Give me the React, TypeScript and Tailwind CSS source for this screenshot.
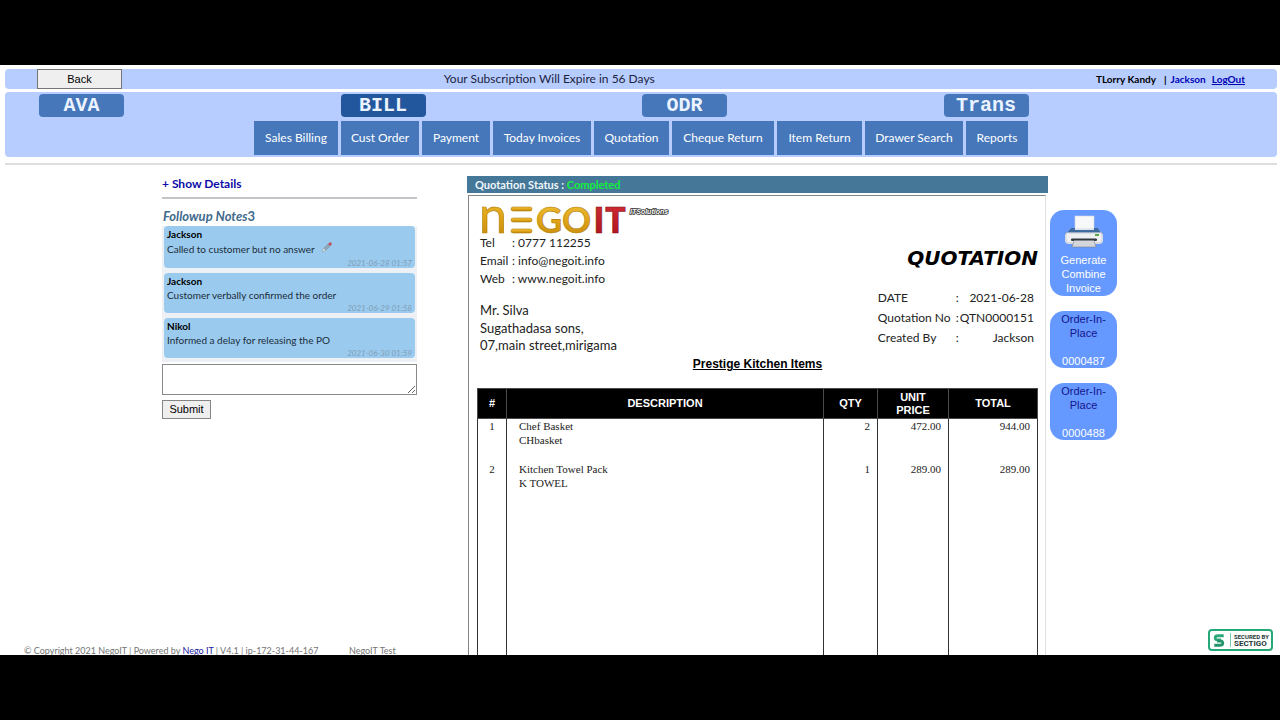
import { clsx } from "clsx";

const mainTabs = ["AVA", "BILL", "ODR", "Trans"];

const subTabs = [
  { label: "Sales Billing", width: "w-[84px]" },
  { label: "Cust Order", width: "w-[78px]" },
  { label: "Payment", width: "w-[68px]" },
  { label: "Today Invoices", width: "w-[98px]" },
  { label: "Quotation", width: "w-[75px]" },
  { label: "Cheque Return", width: "w-[102px]" },
  { label: "Item Return", width: "w-[85px]" },
  { label: "Drawer Search", width: "w-[98px]" },
  { label: "Reports", width: "w-[62px]" },
];

const notes = [
  { author: "Jackson", text: "Called to customer but no answer", date: "2021-06-28 01:57", editable: true },
  { author: "Jackson", text: "Customer verbally confirmed the order", date: "2021-06-29 01:58" },
  { author: "Nikol", text: "Informed a delay for releasing the PO", date: "2021-06-30 01:59" },
];

const contacts = [
  ["Tel", "0777 112255"],
  ["Email", "info@negoit.info"],
  ["Web", "www.negoit.info"],
];

const meta = [
  ["DATE", "2021-06-28"],
  ["Quotation No", "QTN0000151"],
  ["Created By", "Jackson"],
];

const items = [
  { name: "Chef Basket", code: "CHbasket", qty: 2, price: "472.00", total: "944.00" },
  { name: "Kitchen Towel Pack", code: "K TOWEL", qty: 1, price: "289.00", total: "289.00" },
];

function Header() {
  return (
    <header className="shrink-0 pt-1 pl-[5px] pr-[3px]">
      <div className="grid h-5 grid-cols-3 items-center rounded bg-[#b7cdff] pr-8 pl-8">
        <button className="h-5 w-[85px] border border-[#767676] bg-[#efefef] font-['Liberation_Sans',sans-serif] text-[11px] leading-4 text-black">
          Back
        </button>
        <p className="pl-1 text-[12px] whitespace-nowrap text-[#1c2340]">Your Subscription Will Expire in 56 Days</p>
        <div className="flex justify-end text-[10px] font-bold whitespace-nowrap text-black">
          <span className="mr-2">TLorry Kandy</span>
          <span className="mr-1">|</span>
          <a href="#profile" className="mr-1.5 text-[#0000b4]">Jackson</a>
          <a href="#logout" className="text-[#0000b4] underline">LogOut</a>
        </div>
      </div>

      <nav className="mt-[3px] h-[65px] rounded bg-[#b7cdff] pt-0.5">
        <div className="grid grid-cols-4 pr-8 pl-[34px]">
          {mainTabs.map((tab) => (
            <button
              key={tab}
              className={clsx(
                "h-[23px] w-[85px] rounded font-['Courier_New','Liberation_Mono',monospace] text-[20px] leading-[23px] font-bold text-[#eaf3ff]",
                tab === "BILL" ? "bg-[#22569d]" : "bg-[#4677bb]",
              )}
            >
              {tab}
            </button>
          ))}
        </div>
        <div className="mt-1 flex justify-center gap-[3px]">
          {subTabs.map((tab) => (
            <button
              key={tab.label}
              className={clsx("h-[34px] bg-[#4677bb] text-[12px] whitespace-nowrap text-white", tab.width)}
            >
              {tab.label}
            </button>
          ))}
        </div>
      </nav>
      <hr className="mt-1.5 border-t-2 border-[#dedede]" />
    </header>
  );
}

function Pencil() {
  return (
    <svg viewBox="0 0 12 12" className="h-3 w-3" aria-hidden="true">
      <path d="M1.5 10.5 2.5 7.5 7 3 9 5 4.5 9.5Z" fill="#8fa9bd" stroke="#6f8b9f" strokeWidth=".6" />
      <path d="M1.5 10.5 2.5 7.5 4.5 9.5Z" fill="#e6dcd0" />
      <path d="M7 3 8.5 1.5Q9.3.9 10 1.6L10.6 2.2Q11.2 3 10.5 3.7L9 5Z" fill="#c3505f" />
    </svg>
  );
}

function Sidebar() {
  return (
    <div className="flex w-[467px] shrink-0 flex-col justify-between">
      <section className="pr-[50px] pl-[162px]">
        <a href="#details" className="block text-[12px] leading-4 font-bold text-[#0b0ba6]">
          + Show Details
        </a>
        <hr className="mt-[5px] border-t-2 border-[#c4c4c8]" />
        <h2 className="mt-2 pl-px text-[13px] leading-[18px] font-bold text-[#3f6b8c]">
          <em>Followup Notes</em>3
        </h2>
        <ul className="mt-px flex flex-col gap-[5px] bg-[#edf1f5] px-0.5 pb-1">
          {notes.map((note) => (
            <li key={note.date} className="rounded bg-[#9acbef] px-[3px] pt-0.5 text-[#1b2c3a]">
              <p className="text-[10px] leading-3 font-bold text-black">{note.author}</p>
              <div className="flex items-center gap-0.5 text-[10px] leading-4">
                {note.text}
                {note.editable && (
                  <button aria-label="Edit note" className="h-[18px] pb-1 pl-1">
                    <Pencil />
                  </button>
                )}
              </div>
              <p className="text-right text-[8px] leading-[10px] text-[#7f9db5] italic">{note.date}</p>
            </li>
          ))}
        </ul>
        <textarea aria-label="New note" className="mt-0.5 block h-[31px] w-full border border-[#8a8a8a] bg-white" />
        <button className="mt-[3px] h-[19px] w-[49px] border border-[#858585] bg-[#efefef] font-['Liberation_Sans',sans-serif] text-[11px] leading-4 text-black">
          Submit
        </button>
      </section>

      <footer className="-mb-1 flex pl-6 text-[9px] leading-4 whitespace-nowrap text-[#747474]">
        <p className="w-[325px]">
          © Copyright 2021 NegoIT | Powered by <a href="#nego" className="text-[#2020a0]">Nego IT</a> | V4.1 | ip-172-31-44-167
        </p>
        <p>NegoIT Test</p>
      </footer>
    </div>
  );
}

function Logo() {
  return (
    <svg viewBox="0 0 190 30" className="h-[30px] w-[190px] overflow-visible" role="img" aria-label="NEGO IT Solutions">
      <defs>
        <linearGradient id="gold" x1="0" y1="0" x2="0" y2="1">
          <stop offset="0" stopColor="#f3c63c" />
          <stop offset=".55" stopColor="#dfa416" />
          <stop offset="1" stopColor="#c08408" />
        </linearGradient>
        <linearGradient id="red" x1="0" y1="0" x2="0" y2="1">
          <stop offset="0" stopColor="#d8323a" />
          <stop offset="1" stopColor="#a80f18" />
        </linearGradient>
      </defs>
      <g fill="url(#gold)" stroke="#b07d10" strokeWidth=".6" fontFamily="Lato, sans-serif" fontWeight="700">
        <text x="-1" y="29" fontSize="50" fontWeight="400">n</text>
        <rect x="31" y="3" width="21" height="4" rx="2" />
        <rect x="31" y="14" width="21" height="4" rx="2" />
        <rect x="31" y="25" width="21" height="4" rx="2" />
        <text x="56" y="29" fontSize="36">G</text>
        <text x="82" y="29" fontSize="36">O</text>
      </g>
      <text x="113" y="29" fontSize="36" fontFamily="'Open Sans', sans-serif" fontWeight="700" fill="url(#red)" stroke="#7d1016" strokeWidth=".6">
        IT
      </text>
      <text x="150" y="10" fontSize="7" fontFamily="'Liberation Sans', sans-serif" fontStyle="italic" fontWeight="700" fill="#fff" stroke="#333" strokeWidth="1.6" paintOrder="stroke">
        ITSolutions
      </text>
    </svg>
  );
}

function Quotation() {
  return (
    <main className="w-[581px] shrink-0">
      <div className="h-[17px] bg-[#457898] px-2 text-[11px] leading-[17px] font-bold text-[#f0f6fa]">
        Quotation Status : <span className="text-[#12ee3c]">Completed</span>
      </div>
      <article className="mt-0.5 mr-0.5 ml-px border border-[#858585] border-r-[#dcdfe4] pr-[7px] pl-2">
        <div className="flex justify-between">
          <div className="pt-2 pl-[3px] text-[12px] leading-[18px] text-[#222]">
            <Logo />
            <table>
              <tbody>
                {contacts.map(([label, value]) => (
                  <tr key={label}>
                    <th scope="row" className="w-8 text-left font-normal">{label}</th>
                    <td>: {value}</td>
                  </tr>
                ))}
              </tbody>
            </table>
            <address className="mt-3.5 text-[13px] leading-[17px] not-italic">
              <p className="mb-px">Mr. Silva</p>
              <p>Sugathadasa sons,</p>
              <p>07,main street,mirigama</p>
            </address>
          </div>
          <div className="pt-[50px]">
            <h1 className="text-right font-['DejaVu_Sans',sans-serif] text-[20px] leading-6 font-bold text-black italic">
              QUOTATION
            </h1>
            <table className="mt-[18px] mr-1 ml-auto text-[12px] leading-5 text-[#222]">
              <tbody>
                {meta.map(([label, value]) => (
                  <tr key={label}>
                    <th scope="row" className="w-[78px] text-left font-normal whitespace-nowrap">{label}</th>
                    <td className="w-1">:</td>
                    <td className="text-right">{value}</td>
                  </tr>
                ))}
              </tbody>
            </table>
          </div>
        </div>

        <h2 className="mt-px text-center font-['Liberation_Sans',sans-serif] text-[12px] leading-[18px] font-bold text-black underline">
          Prestige Kitchen Items
        </h2>

        <table className="mt-[15px] w-full table-fixed border-collapse font-['Liberation_Serif',serif] text-[11px] leading-[14px] text-[#222]">
          <thead className="bg-black font-['Liberation_Sans',sans-serif] leading-[13px] text-white">
            <tr className="h-[30px] *:border *:border-[#4a4a4a]">
              <th className="w-[29px]">#</th>
              <th>DESCRIPTION</th>
              <th className="w-[54px]">QTY</th>
              <th className="w-[71px] px-3">UNIT PRICE</th>
              <th className="w-[89px]">TOTAL</th>
            </tr>
          </thead>
          <tbody className="align-top">
            {items.map((item, i) => (
              <tr key={item.code} className="h-[43px] *:border-x *:border-[#333]">
                <td className="text-center">{i + 1}</td>
                <td className="pl-3">
                  {item.name}
                  <br />
                  {item.code}
                </td>
                <td className="pr-[7px] text-right">{item.qty}</td>
                <td className="pr-[7px] text-right">{item.price}</td>
                <td className="pr-[7px] text-right">{item.total}</td>
              </tr>
            ))}
            <tr className="h-96 *:border-x *:border-[#333]">
              <td />
              <td />
              <td />
              <td />
              <td />
            </tr>
          </tbody>
        </table>
      </article>
    </main>
  );
}

function Printer() {
  return (
    <svg viewBox="0 0 40 34" className="mx-auto h-[34px] w-10" aria-hidden="true">
      <rect x="11" y="1" width="19" height="16" fill="#f7f8fa" stroke="#cfd4dc" strokeWidth=".6" />
      <path d="M7 13H34L39 20V25Q39 29 35 29H5Q1 29 1 25V20Z" fill="#e4e6ea" />
      <path d="M7 13H11V15H30V13H34L37 17.500H3Z" fill="#3e6ca0" />
      <path d="M2 18H38V25Q38 28 35 28H5Q2 28 2 25Z" fill="#eef0f2" stroke="#b9bec6" strokeWidth=".6" />
      <rect x="7" y="23.500" width="26" height="2.500" rx="1" fill="#34383e" />
      <path d="M10 25.500H30L32 32H8Z" fill="#d3d6db" stroke="#7d848e" strokeWidth=".6" />
      <rect x="31" y="19" width="4" height="2" fill="#56a943" />
    </svg>
  );
}

function SectigoBadge() {
  return (
    <a href="#sectigo" aria-label="Secured by Sectigo" className="mr-[7px] mb-1 flex h-[22px] w-[65px] items-center self-end rounded border-2 border-[#25a878] bg-white">
      <svg viewBox="0 0 18 18" className="h-[17px] w-[18px] shrink-0" aria-hidden="true">
        <path d="M14 4H7.500Q5 4 5 6.300T7.500 8.500H11" fill="none" stroke="#2aa879" strokeWidth="3" />
        <path d="M4 14H10.500Q13 14 13 11.700T10.500 9.500H7" fill="none" stroke="#25936b" strokeWidth="3" />
      </svg>
      <span className="ml-0.5 border-l border-[#7cc9ae] pl-[3px] font-['Roboto',sans-serif] leading-[7px] font-bold whitespace-nowrap text-[#1f3a38]">
        <span className="block text-[6px] leading-[7px]">SECURED BY</span>
        <span className="block text-[8px] leading-[7px]">SECTIGO</span>
      </span>
    </a>
  );
}

function Actions() {
  return (
    <aside className="flex flex-1 justify-between pl-0.5">
      <div className="flex w-[67px] flex-col gap-[15px] pt-[34px] font-['Liberation_Sans',sans-serif] text-[11px] leading-[14px]">
        <button className="h-[86px] rounded-[14px] bg-[#6699ff] pt-1 text-white">
          <Printer />
          <span className="mt-1 block">Generate Combine Invoice</span>
        </button>
        {["0000487", "0000488"].map((order) => (
          <button key={order} className="h-[57px] rounded-[14px] bg-[#6699ff] text-white">
            <span className="mb-3.5 block text-[#14148c]">
              Order-In-
              <br />
              Place
            </span>
            {order}
          </button>
        ))}
      </div>
      <SectigoBadge />
    </aside>
  );
}

export default function App() {
  return (
    <div className="h-screen bg-black py-[65px] font-['Lato',sans-serif]">
      <div className="flex h-full flex-col overflow-hidden bg-white">
        <Header />
        <div className="flex min-h-0 flex-1 pt-[11px]">
          <Sidebar />
          <Quotation />
          <Actions />
        </div>
      </div>
    </div>
  );
}
